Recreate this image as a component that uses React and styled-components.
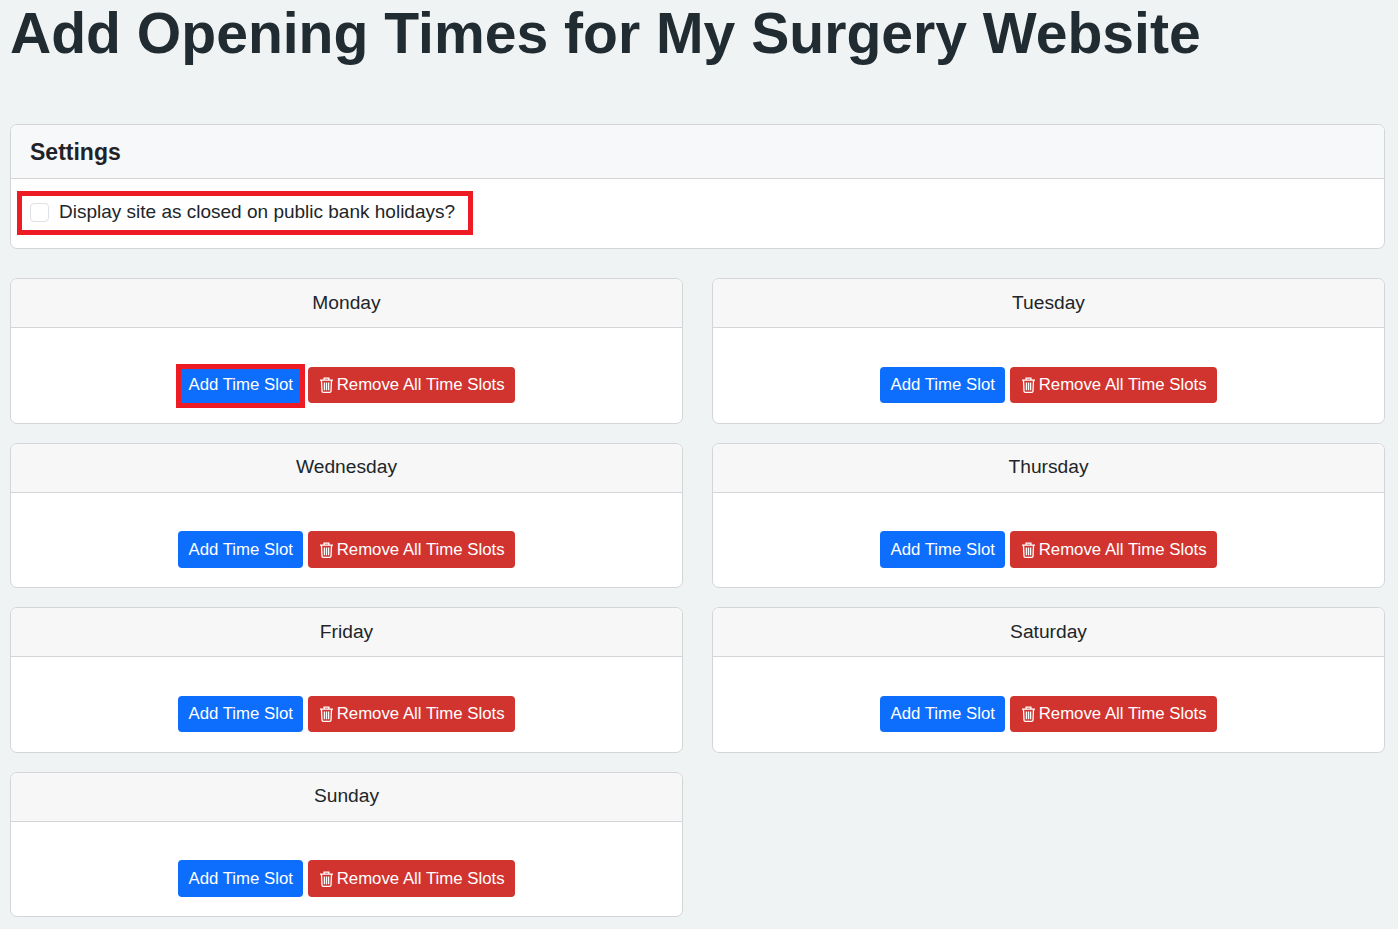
import React from "react";
import styled, { createGlobalStyle } from "styled-components";

const Global = createGlobalStyle`
  html, body { margin: 0; padding: 0; }
  body { background: #f0f3f4; font-family: "Liberation Sans", Arial, sans-serif; color: #212529; }
  * { box-sizing: border-box; }
`;
const Page = styled.main`
  padding: 0 13px 0 10px;
  height: 929px;
  overflow: hidden;
`;
const Title = styled.h1`
  margin: 0 0 57px;
  font-size: 57.1px;
  line-height: 67px;
  font-weight: 700;
  color: #212b32;
`;
const Card = styled.section`
  background: #fff;
  border: 1px solid #d4d5d7;
  border-radius: 7px;
  overflow: hidden;
`;
const SettingsCard = styled(Card)`
  height: 125px;
  margin-bottom: 29px;
`;
const SettingsHeader = styled.header`
  height: 54px;
  padding: 2px 19px 0;
  display: flex;
  align-items: center;
  background: #f7f8fa;
  border-bottom: 1px solid #d4d5d7;
  font-size: 23px;
  font-weight: 700;
  color: #1f2328;
`;
const SettingsBody = styled.div`
  padding: 12px 6px;
`;
const Highlight = styled.label`
  display: inline-flex;
  align-items: center;
  width: 456px;
  height: 44px;
  padding: 0 8px 2px;
  gap: 10px;
  border: 5px solid #ed1c24;
  font-size: 19px;
`;
const Check = styled.input.attrs({ type: "checkbox" })`
  appearance: none;
  margin: 0;
  width: 19px;
  height: 19px;
  background: #fff;
  border: 1px solid #dee2e6;
  border-radius: 4px;
`;
const Grid = styled.div`
  display: grid;
  grid-template-columns: 673px 673px;
  column-gap: 29px;
  row-gap: 19px;
`;
const DayCard = styled(Card)`
  height: 145.5px;
`;
const DayHeader = styled.header`
  height: 49px;
  padding-bottom: 1px;
  display: flex;
  align-items: center;
  justify-content: center;
  background: #f7f7f7;
  border-bottom: 1px solid #d4d5d7;
  font-size: 19.2px;
`;
const Actions = styled.div`
  display: flex;
  justify-content: center;
  gap: 5px;
  padding-top: 38.5px;
`;
const Button = styled.button`
  position: relative;
  height: 36.5px;
  padding: 0.8px 10.4px 0;
  display: inline-flex;
  align-items: center;
  gap: 3px;
  border: 0;
  border-radius: 4px;
  color: #fff;
  font: 400 16.8px "Liberation Sans", Arial, sans-serif;
  background: ${(p) => (p.$danger ? "#d1342f" : "#0d6efd")};
`;
const MarkedButton = styled(Button)`
  &::after {
    content: "";
    position: absolute;
    inset: -3px -2px -4.5px;
    border: 5px solid #ed1c24;
  }
`;
const TrashIcon = () => (
  <svg width="15" height="16" viewBox="0 0 15 16" fill="none" stroke="#fff" strokeWidth="1.3" aria-hidden="true">
    <path d="M1 3.2h13M5.1 3V1.2h4.8V3M2.5 3.4l.5 10.7q.1 1.2 1.2 1.2h6.6q1.1 0 1.2-1.2l.5-10.7" />
    <path d="M5.4 5.4v7.8M7.5 5.4v7.8M9.6 5.4v7.8" />
  </svg>
);
const days = ["Monday", "Tuesday", "Wednesday", "Thursday", "Friday", "Saturday", "Sunday"];

export default function App() {
  return (
    <Page>
      <Global />
      <Title>Add Opening Times for My Surgery Website</Title>
      <SettingsCard>
        <SettingsHeader>Settings</SettingsHeader>
        <SettingsBody>
          <Highlight><Check />Display site as closed on public bank holidays?</Highlight>
        </SettingsBody>
      </SettingsCard>
      <Grid>
        {days.map((d, i) => {
          const Add = i === 0 ? MarkedButton : Button;
          return (
            <DayCard key={d}>
              <DayHeader>{d}</DayHeader>
              <Actions>
                <Add>Add Time Slot</Add>
                <Button $danger><TrashIcon />Remove All Time Slots</Button>
              </Actions>
            </DayCard>
          );
        })}
      </Grid>
    </Page>
  );
}
